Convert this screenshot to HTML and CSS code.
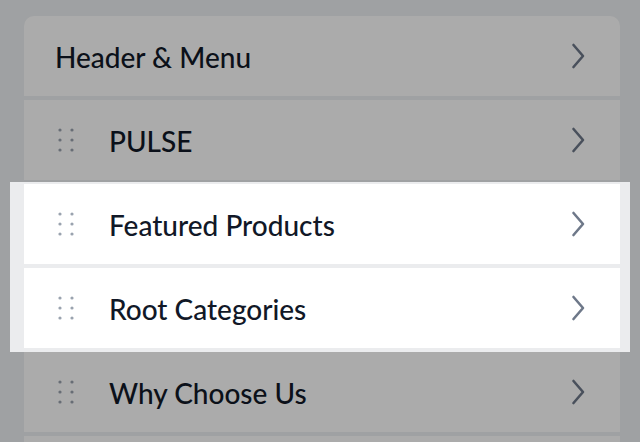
FILE: index.html
```html
<!DOCTYPE html>
<html>
<head>
<meta charset="utf-8">
<link rel="stylesheet" href="styles.css">
</head>
<body>
<div class="page">
  <div class="list">
    <div class="row row-top">
      <span class="label">Header &amp; Menu</span>
      <svg class="chev" width="14" height="26" viewBox="0 0 14 26"><polyline points="2.5,2 12,13 2.5,24" /></svg>
    </div>
    <div class="row">
      <svg class="grip" width="16" height="24" viewBox="0 0 16 24"><circle cx="2" cy="2" r="1.6"/><circle cx="14" cy="2" r="1.6"/><circle cx="2" cy="12" r="1.6"/><circle cx="14" cy="12" r="1.6"/><circle cx="2" cy="22" r="1.6"/><circle cx="14" cy="22" r="1.6"/></svg>
      <span class="label">PULSE</span>
      <svg class="chev" width="14" height="26" viewBox="0 0 14 26"><polyline points="2.5,2 12,13 2.5,24" /></svg>
    </div>
    <div class="spot">
      <div class="row">
        <svg class="grip" width="16" height="24" viewBox="0 0 16 24"><circle cx="2" cy="2" r="1.6"/><circle cx="14" cy="2" r="1.6"/><circle cx="2" cy="12" r="1.6"/><circle cx="14" cy="12" r="1.6"/><circle cx="2" cy="22" r="1.6"/><circle cx="14" cy="22" r="1.6"/></svg>
        <span class="label">Featured Products</span>
        <svg class="chev" width="14" height="26" viewBox="0 0 14 26"><polyline points="2.5,2 12,13 2.5,24" /></svg>
      </div>
      <div class="row">
        <svg class="grip" width="16" height="24" viewBox="0 0 16 24"><circle cx="2" cy="2" r="1.6"/><circle cx="14" cy="2" r="1.6"/><circle cx="2" cy="12" r="1.6"/><circle cx="14" cy="12" r="1.6"/><circle cx="2" cy="22" r="1.6"/><circle cx="14" cy="22" r="1.6"/></svg>
        <span class="label">Root Categories</span>
        <svg class="chev" width="14" height="26" viewBox="0 0 14 26"><polyline points="2.5,2 12,13 2.5,24" /></svg>
      </div>
    </div>
    <div class="row">
      <svg class="grip" width="16" height="24" viewBox="0 0 16 24"><circle cx="2" cy="2" r="1.6"/><circle cx="14" cy="2" r="1.6"/><circle cx="2" cy="12" r="1.6"/><circle cx="14" cy="12" r="1.6"/><circle cx="2" cy="22" r="1.6"/><circle cx="14" cy="22" r="1.6"/></svg>
      <span class="label">Why Choose Us</span>
      <svg class="chev" width="14" height="26" viewBox="0 0 14 26"><polyline points="2.5,2 12,13 2.5,24" /></svg>
    </div>
    <div class="row"></div>
  </div>
</div>
</body>
</html>
```
FILE: styles.css
```css
html, body {
  margin: 0;
  padding: 0;
  height: 100%;
  overflow: hidden;
}
body {
  background: #eef0f3;
  font-family: Lato, "Noto Sans", sans-serif;
  color: #111827;
}
.page {
  padding: 16px 20px 0 24px;
}
.list {
  display: flex;
  flex-direction: column;
  gap: 4px;
}
.row {
  display: flex;
  align-items: center;
  flex: none;
  height: 80px;
  background: #ffffff;
  padding: 0 35px 0 34px;
}
.row-top {
  padding-left: 31px;
  border-radius: 10px 10px 0 0;
}
.grip {
  flex: none;
  fill: #9aa3af;
  margin-right: 35px;
}
.label {
  flex: 1;
  font-size: 28px;
  line-height: 1;
  font-weight: 500;
  padding-top: 1px;
}
.chev {
  flex: none;
  fill: none;
  stroke: #6e7889;
  stroke-width: 2.6;
  stroke-linecap: round;
  stroke-linejoin: round;
}
.spot {
  position: relative;
  z-index: 1;
  display: flex;
  flex-direction: column;
  gap: 4px;
  margin: -2px -10px 0 -14px;
  padding: 2px 10px 4px 14px;
  background: #ebecee;
  box-shadow: 0 0 0 2000px rgba(0, 0, 0, 0.33);
}
.spot + .row {
  margin-top: -4px;
}
```
